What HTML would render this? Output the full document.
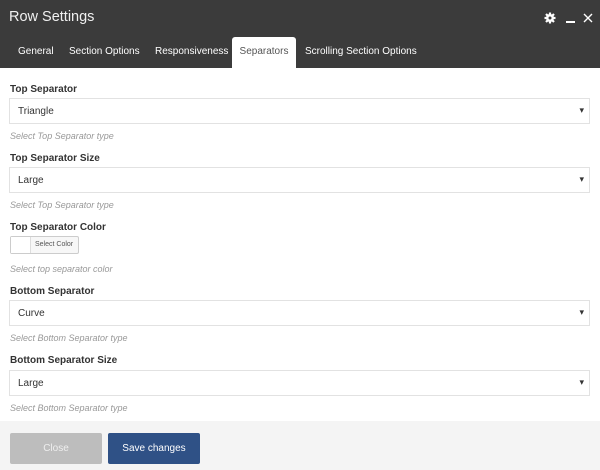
<!DOCTYPE html>
<html><head><style>
*{margin:0;padding:0;box-sizing:border-box}
body{width:600px;height:470px;overflow:hidden;background:#fff;font-family:"Liberation Sans",sans-serif;position:relative}
.hdr{position:absolute;left:0;top:0;width:600px;height:68px;background:#3b3b3b}
.title{position:absolute;left:9px;top:9px;color:#f0f0f0;font-size:14.5px}
.tab{position:absolute;top:46px;color:#fff;font-size:10px}
.atab{position:absolute;left:232px;top:37px;width:64px;height:31px;background:#fff;border-radius:3px 3px 0 0;color:#555;font-size:10px;text-align:center;padding-top:9px}
.lbl{position:absolute;left:10px;font-size:10px;font-weight:bold;color:#333}
.sel{position:absolute;left:9px;width:581px;height:26px;border:1px solid #e2e2e2;font-size:10px;color:#333;padding:7px 0 0 8px}
.sel:after{content:"▾";position:absolute;right:5px;top:6px;font-size:9px;color:#333}
.help{position:absolute;left:10px;font-size:9px;font-style:italic;color:#999}
.foot{position:absolute;left:0;top:421px;width:600px;height:49px;background:#f4f4f4}
.btn{position:absolute;top:433px;width:92px;height:31px;border-radius:2px;font-size:10px;text-align:center;line-height:31px}
</style></head><body>
<div class="hdr">
<div class="title">Row Settings</div>
<svg style="position:absolute;left:544px;top:12px" width="12" height="12" viewBox="0 0 12 12"><circle cx="6" cy="6" r="4" fill="#fff"/><g stroke="#fff" stroke-width="2.2"><line x1="6" y1="0.5" x2="6" y2="11.5"/><line x1="0.5" y1="6" x2="11.5" y2="6"/><line x1="2" y1="2" x2="10" y2="10"/><line x1="10" y1="2" x2="2" y2="10"/></g><circle cx="6" cy="6" r="1.5" fill="#3b3b3b"/></svg>
<div style="position:absolute;left:566px;top:21px;width:9px;height:1.5px;background:#fff"></div>
<svg style="position:absolute;left:583px;top:13px" width="10" height="10" viewBox="0 0 10 10"><path d="M1 1L9 9M9 1L1 9" stroke="#fff" stroke-width="1.4"/></svg>
<div class="tab" style="left:18px">General</div>
<div class="tab" style="left:69px">Section Options</div>
<div class="tab" style="left:155px">Responsiveness</div>
<div class="atab">Separators</div>
<div class="tab" style="left:305px">Scrolling Section Options</div>
</div>
<div class="lbl" style="top:84px">Top Separator</div>
<div class="sel" style="top:98px">Triangle</div>
<div class="help" style="top:131px">Select Top Separator type</div>
<div class="lbl" style="top:153px">Top Separator Size</div>
<div class="sel" style="top:167px">Large</div>
<div class="help" style="top:200px">Select Top Separator type</div>
<div class="lbl" style="top:222px">Top Separator Color</div>
<div style="position:absolute;left:10px;top:236px;width:69px;height:18px;border:1px solid #ccc;border-radius:2px;background:#f7f7f7"><div style="position:absolute;left:0;top:0;width:20px;height:16px;background:#fff;border-right:1px solid #ddd"></div><span style="position:absolute;left:24px;top:4px;font-size:7px;color:#555">Select Color</span></div>
<div class="help" style="top:264px">Select top separator color</div>
<div class="lbl" style="top:286px">Bottom Separator</div>
<div class="sel" style="top:300px">Curve</div>
<div class="help" style="top:333px">Select Bottom Separator type</div>
<div class="lbl" style="top:355px">Bottom Separator Size</div>
<div class="sel" style="top:370px">Large</div>
<div class="help" style="top:403px">Select Bottom Separator type</div>
<div class="foot"></div>
<div class="btn" style="left:10px;background:#bdbdbd;color:#eee">Close</div>
<div class="btn" style="left:108px;background:#2f5186;color:#fff">Save changes</div>
</body></html>
